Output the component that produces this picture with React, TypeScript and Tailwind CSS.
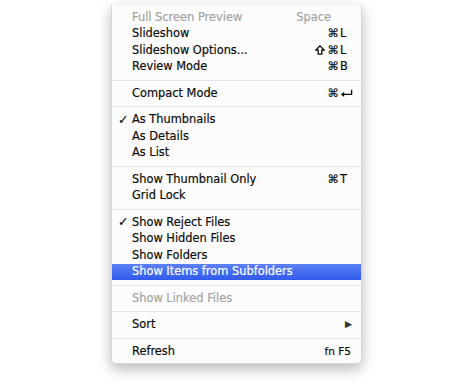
import React from "react";

type Item = {
  label: string;
  mods?: string;
  keyc?: string;
  text?: string;
  disabled?: boolean;
  checked?: boolean;
  selected?: boolean;
  submenu?: boolean;
};

const groups: Item[][] = [
  [
    { label: "Full Screen Preview", text: "Space", disabled: true },
    { label: "Slideshow", mods: "⌘", keyc: "L" },
    { label: "Slideshow Options...", mods: "⇧⌘", keyc: "L" },
    { label: "Review Mode", mods: "⌘", keyc: "B" },
  ],
  [{ label: "Compact Mode", mods: "⌘", keyc: "↩" }],
  [
    { label: "As Thumbnails", checked: true },
    { label: "As Details" },
    { label: "As List" },
  ],
  [
    { label: "Show Thumbnail Only", mods: "⌘", keyc: "T" },
    { label: "Grid Lock" },
  ],
  [
    { label: "Show Reject Files", checked: true },
    { label: "Show Hidden Files" },
    { label: "Show Folders" },
    { label: "Show Items from Subfolders", selected: true },
  ],
  [{ label: "Show Linked Files", disabled: true }],
  [{ label: "Sort", submenu: true }],
  [{ label: "Refresh", text: "fn F5" }],
];

function ShiftIcon() {
  return (
    <svg width="10" height="10" viewBox="0 0 10 10" className="mr-[3px]">
      <path
        d="M5 0.9 L9.2 5.2 H6.8 V9.2 H3.2 V5.2 H0.8 Z"
        fill="none"
        stroke="currentColor"
        strokeWidth="1.3"
        strokeLinejoin="miter"
      />
    </svg>
  );
}

function ReturnIcon() {
  return (
    <svg width="14" height="10" viewBox="0 0 14 10">
      <path d="M12.5 1.5 V6.5 H3.5" fill="none" stroke="currentColor" strokeWidth="1.4" />
      <path d="M1 6.5 L4.5 3.6 V9.4 Z" fill="currentColor" />
    </svg>
  );
}

function Mods({ mods }: { mods: string }) {
  return (
    <span className="flex items-center">
      {mods.split("").map((m, i) =>
        m === "⇧" ? <ShiftIcon key={i} /> : <span key={i}>{m}</span>
      )}
    </span>
  );
}

function Row({ item }: { item: Item }) {
  const color = item.selected
    ? "text-white bg-gradient-to-b from-[#5d80f4] to-[#3059ee]"
    : item.disabled
    ? "text-[#a3a3a3]"
    : "text-[#0a0a0a]";
  return (
    <div className={`relative flex h-[16.5px] items-center pl-[20px] pr-[8px] ${color}`}>
      {item.checked && (
        <span className="absolute left-[6px] top-0 flex h-full items-center text-[12.5px]">✓</span>
      )}
      <span className="flex-1 whitespace-nowrap">{item.label}</span>
      {item.mods && (
        <span className="flex items-center">
          <Mods mods={item.mods} />
          <span className="flex w-[14px] pl-[1px] text-left">
            {item.keyc === "↩" ? <ReturnIcon /> : item.keyc}
          </span>
        </span>
      )}
      {item.text === "Space" && <span className="mr-[22px]">Space</span>}
      {item.text === "fn F5" && <span className="mr-[2px] text-[10.5px]">fn F5</span>}
      {item.submenu && <span className="mr-[1px] text-[9px] text-[#333]">▶</span>}
    </div>
  );
}

export default function App() {
  return (
    <div className="h-[386px] w-[474px] overflow-hidden bg-white pt-[5px]">
      <div
        className="ml-[111px] w-[251px] rounded-b-[5px] border-x border-b border-[#d6d6d6] bg-[#fcfcfc] pt-[4px] pb-[3px] shadow-[0_5px_14px_rgba(0,0,0,0.28)] text-[11.4px] leading-none [-webkit-text-stroke:0.18px]"
        style={{ fontFamily: '"DejaVu Sans", "Noto Sans", sans-serif' }}
      >
        {groups.map((g, gi) => (
          <React.Fragment key={gi}>
            {gi > 0 && (
              <div className="flex h-[10px] items-center">
                <div className="h-px w-full bg-[#e3e3e3]" />
              </div>
            )}
            {g.map((it) => (
              <Row key={it.label} item={it} />
            ))}
          </React.Fragment>
        ))}
      </div>
    </div>
  );
}
